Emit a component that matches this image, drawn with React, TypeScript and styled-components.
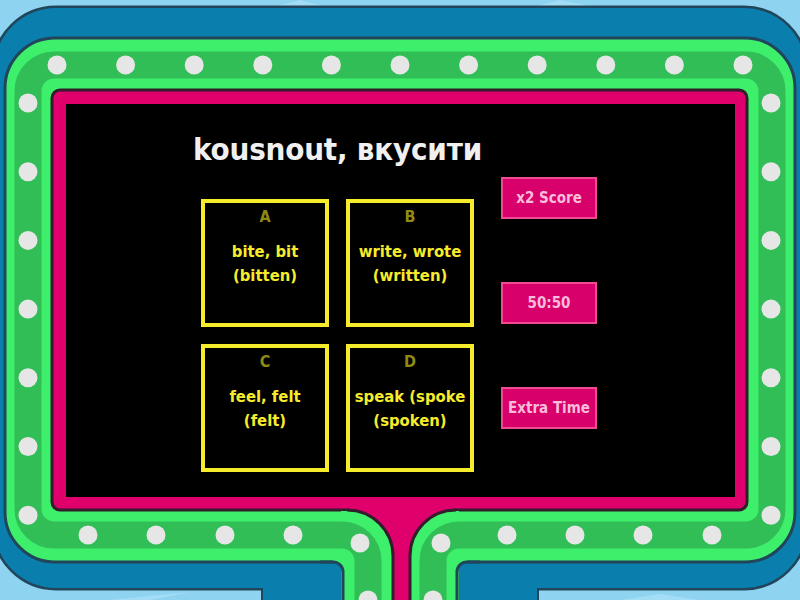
import styled, { createGlobalStyle } from "styled-components";

const GlobalStyle = createGlobalStyle`
  html, body {
    margin: 0;
    padding: 0;
    background: #8ed3f0;
  }
  * {
    box-sizing: border-box;
  }
`;

const Stage = styled.div`
  position: relative;
  width: 800px;
  height: 600px;
  overflow: hidden;
  padding: 104px 0 0 66px;
  font-family: "DejaVu Sans Condensed", "DejaVu Sans", sans-serif;
  font-stretch: condensed;
`;

const Backdrop = styled.svg`
  position: absolute;
  inset: 0;
  z-index: 0;
`;

const Screen = styled.div`
  position: relative;
  z-index: 1;
  width: 669px;
  height: 393px;
  background: #000;
  padding: 27px 0 0 127px;
`;

const Title = styled.h1`
  margin: 0 0 10px;
  height: 36px;
  line-height: 36px;
  font-size: 31px;
  font-weight: 700;
  color: #f0f0f0;
  letter-spacing: -0.2px;
`;

const Body = styled.div`
  display: flex;
  align-items: flex-start;
  gap: 27px;
  padding-left: 8px;
`;

const AnswerGrid = styled.div`
  display: grid;
  grid-template-columns: repeat(2, 128px);
  grid-auto-rows: 128px;
  gap: 17px;
  margin-top: 22px;
`;

const AnswerCard = styled.div`
  display: flex;
  flex-direction: column;
  align-items: center;
  border: 4px solid #f7ec2c;
  padding-top: 4px;
  color: #f7ec2c;
`;

const Letter = styled.div`
  font-size: 16px;
  line-height: 20px;
  font-weight: 700;
  color: #8e8a12;
  margin-bottom: 13px;
`;

const AnswerText = styled.div`
  font-size: 16.5px;
  line-height: 24px;
  font-weight: 700;
  text-align: center;
  white-space: nowrap;
`;

const PowerColumn = styled.div`
  display: flex;
  flex-direction: column;
  gap: 63px;
`;

const PowerButton = styled.div`
  width: 96px;
  height: 42px;
  display: flex;
  align-items: center;
  justify-content: center;
  background: #d8006a;
  border: 2px solid #f04a92;
  color: #f9bcd9;
  font-size: 15px;
  font-weight: 700;
`;

const answers = [
  { letter: "A", lines: ["bite, bit", "(bitten)"] },
  { letter: "B", lines: ["write, wrote", "(written)"] },
  { letter: "C", lines: ["feel, felt", "(felt)"] },
  { letter: "D", lines: ["speak (spoke", "(spoken)"] },
];

const powers = ["x2 Score", "50:50", "Extra Time"];

const DARK = "#21465b";
const EDGE = "#331c2c";
const BLUE = "#0a7fae";
const GREEN = "#3def6b";
const STRIP = "#31be56";
const PINK = "#df006b";
const DOT = "#e6e6e6";

const topDots = Array.from({ length: 11 }, (_, i) => 57 + i * 68.6);
const sideDots = Array.from({ length: 7 }, (_, i) => 103 + i * 68.7);
const bottomLeft = [88, 156, 225, 293];
const bottomRight = [507, 575, 643, 712];

function FrameArt() {
  return (
    <Backdrop width="800" height="600" viewBox="0 0 800 600">
      <rect x="0" y="0" width="800" height="600" fill="#8ed3f0" />
      <polygon points="300,0 330,8 270,8" fill="#a3dcf5" />
      <polygon points="560,0 600,8 530,8" fill="#a3dcf5" />
      <polygon points="150,600 190,592 110,600" fill="#a3dcf5" />
      <polygon points="620,600 660,594 700,600" fill="#a3dcf5" />

      {/* outer blue frame + stand */}
      <rect x="-6" y="8" width="812" height="580" rx="62" fill={BLUE} stroke={DARK} strokeWidth="5" />
      <rect x="263" y="500" width="274" height="120" fill={BLUE} stroke={DARK} strokeWidth="4" />
      <rect x="-6" y="8" width="812" height="580" rx="62" fill={BLUE} />
      <rect x="263" y="500" width="274" height="120" fill={BLUE} />

      {/* green marquee */}
      <rect x="5" y="38" width="790" height="524" rx="50" fill={GREEN} stroke={DARK} strokeWidth="3" />
      <rect x="345" y="505" width="113" height="110" fill={PINK} />

      {/* pink bezel */}
      <rect x="52" y="90" width="695" height="420" rx="8" fill={PINK} stroke={EDGE} strokeWidth="3" />
      <rect x="349" y="505" width="105" height="9" fill={PINK} />

      {/* legs around the stem */}
      <path d="M 341 511 H 348 A 45 45 0 0 1 393 556 V 615 H 341 Z" fill={GREEN} />
      <path d="M 347 510 A 46 46 0 0 1 393 556 V 615" fill="none" stroke={EDGE} strokeWidth="3" />
      <path d="M 333 560 L 343 560 L 343 572 A 10 10 0 0 0 333 562 Z" fill={GREEN} />
      <path d="M 320 562 H 333 A 10 10 0 0 1 343 572 V 615" fill="none" stroke={DARK} strokeWidth="3" />

      <path d="M 459 511 H 455 A 45 45 0 0 0 410 556 V 615 H 459 Z" fill={GREEN} />
      <path d="M 456 510 A 46 46 0 0 0 410 556 V 615" fill="none" stroke={EDGE} strokeWidth="3" />
      <path d="M 467 560 L 457 560 L 457 572 A 10 10 0 0 1 467 562 Z" fill={GREEN} />
      <path d="M 480 562 H 467 A 10 10 0 0 0 457 572 V 615" fill="none" stroke={DARK} strokeWidth="3" />

      <path
        d="M 368 615 V 561 A 26 26 0 0 0 342 535 H 54 A 26 26 0 0 1 28 509 V 91 A 26 26 0 0 1 54 65 H 746 A 26 26 0 0 1 772 91 V 509 A 26 26 0 0 1 746 535 H 459 A 26 26 0 0 0 433 561 V 615"
        fill="none"
        stroke={STRIP}
        strokeWidth="27"
      />

      {topDots.map((x) => (
        <circle key={`t${x}`} cx={x} cy="65" r="9.5" fill={DOT} />
      ))}
      {sideDots.map((y) => (
        <g key={`s${y}`}>
          <circle cx="28" cy={y} r="9.5" fill={DOT} />
          <circle cx="771" cy={y} r="9.5" fill={DOT} />
        </g>
      ))}
      {[...bottomLeft, ...bottomRight].map((x) => (
        <circle key={`b${x}`} cx={x} cy="535" r="9.5" fill={DOT} />
      ))}
      <circle cx="360" cy="543" r="9.5" fill={DOT} />
      <circle cx="441" cy="543" r="9.5" fill={DOT} />
      <circle cx="368" cy="600" r="9.5" fill={DOT} />
      <circle cx="433" cy="600" r="9.5" fill={DOT} />
    </Backdrop>
  );
}

export default function App() {
  return (
    <>
      <GlobalStyle />
      <Stage>
        <FrameArt />
        <Screen>
          <Title>kousnout, вкусити</Title>
          <Body>
            <AnswerGrid>
              {answers.map((a) => (
                <AnswerCard key={a.letter}>
                  <Letter>{a.letter}</Letter>
                  <AnswerText>
                    {a.lines.map((l) => (
                      <div key={l}>{l}</div>
                    ))}
                  </AnswerText>
                </AnswerCard>
              ))}
            </AnswerGrid>
            <PowerColumn>
              {powers.map((p) => (
                <PowerButton key={p}>{p}</PowerButton>
              ))}
            </PowerColumn>
          </Body>
        </Screen>
      </Stage>
    </>
  );
}
